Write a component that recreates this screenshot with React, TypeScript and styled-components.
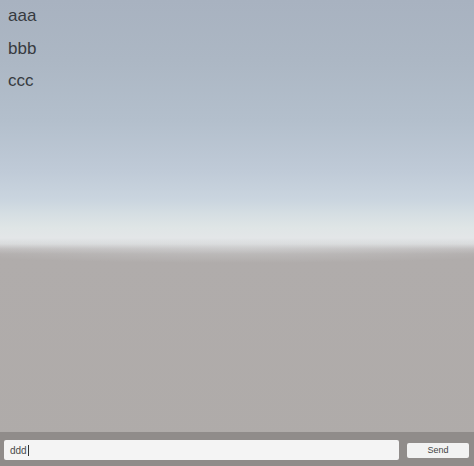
import React from "react";
import styled, { createGlobalStyle } from "styled-components";

const Global = createGlobalStyle`
  html, body { margin: 0; padding: 0; width: 100%; height: 100%; overflow: hidden; }
  #root { width: 100%; height: 100%; }
`;

const Scene = styled.div`
  width: 474px;
  height: 466px;
  display: flex;
  flex-direction: column;
  font-family: "Liberation Sans", Arial, sans-serif;
  color: #363a40;
  background:
    radial-gradient(ellipse 70% 14px at 50% 249px, rgba(226, 230, 232, 0.35), rgba(226, 230, 232, 0) 100%),
    linear-gradient(
      to bottom,
      #a8b2c0 0px,
      #acb7c4 60px,
      #b3bfcc 120px,
      #bfcad7 170px,
      #cad5df 200px,
      #d6dfe3 215px,
      #dfe5e6 228px,
      #e3e6e8 238px,
      #d8dadb 244px,
      #bdbaba 249px,
      #b0acab 254px,
      #afaba9 100%
    );
`;

const Messages = styled.div`
  flex: 1;
  display: flex;
  flex-direction: column;
  gap: 14.5px;
  padding: 7px 0 0 8px;
`;

const Message = styled.div`
  font-size: 17px;
  line-height: 18px;
`;

const Bar = styled.div`
  height: 34px;
  box-sizing: border-box;
  padding: 8px 5px 6px 4px;
  background: #908c8a;
  display: flex;
  align-items: center;
  gap: 8px;
`;

const InputBox = styled.div`
  flex: 1;
  height: 20px;
  box-sizing: border-box;
  background: #f4f4f4;
  border-radius: 2px;
  display: flex;
  align-items: center;
  padding-left: 6px;
  font-size: 10px;
  color: #4a4a4a;
`;

const Caret = styled.span`
  display: inline-block;
  width: 1px;
  height: 11px;
  background: #323232;
  margin-left: 1px;
`;

const SendButton = styled.button`
  width: 62px;
  height: 15px;
  border: none;
  border-radius: 2px;
  background: #f2f2f2;
  font-family: "Liberation Sans", Arial, sans-serif;
  font-size: 9px;
  color: #444;
  padding: 0;
  display: flex;
  align-items: center;
  justify-content: center;
`;

export default function App() {
  const items = ["aaa", "bbb", "ccc"];
  return (
    <>
      <Global />
      <Scene>
        <Messages>
          {items.map((t) => (
            <Message key={t}>{t}</Message>
          ))}
        </Messages>
        <Bar>
          <InputBox>
            ddd<Caret />
          </InputBox>
          <SendButton>Send</SendButton>
        </Bar>
      </Scene>
    </>
  );
}
